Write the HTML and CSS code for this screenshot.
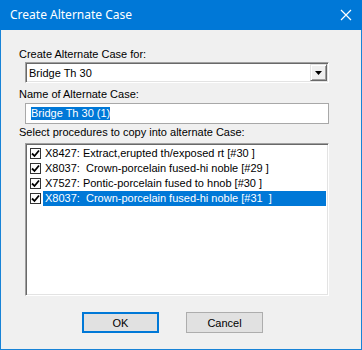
FILE: index.html
```html
<!DOCTYPE html>
<html lang="en">

<head>
    <meta charset="UTF-8">
    <meta name="viewport" content="width=device-width, initial-scale=1.0">
    <link rel="stylesheet" href="styles.css">
    <title>Create Alternate Case</title>
</head>

<body>
    <div class="window">
        <div class="title-bar">
            <span class="title">Create Alternate Case</span>
            <svg class="close" width="12" height="12" viewBox="0 0 12 12">
                <path d="M1 1 L11 11 M11 1 L1 11" stroke="#fff" stroke-width="1.2" fill="none"/>
            </svg>
        </div>

        <div class="content">
            <label class="label label-first">Create Alternate Case for:</label>
            <div class="combo">
                <span class="combo-text">Bridge Th 30</span>
                <span class="combo-button">
                    <svg width="7" height="4" viewBox="0 0 7 4"><path d="M0 0 H7 L3.5 4 Z" fill="#000"/></svg>
                </span>
            </div>

            <label class="label label-name">Name of Alternate Case:</label>
            <div class="textbox"><span class="selected-text">Bridge Th 30 (1)</span></div>

            <label class="label label-list">Select procedures to copy into alternate Case:</label>
            <div class="listbox">
                <div class="row">
                    <span class="check"><svg width="9" height="9" viewBox="0 0 9 9"><path d="M1 4.5 L3.5 7 L8 1.5" stroke="#000" stroke-width="1.8" fill="none"/></svg></span>
                    <span class="row-text">X8427: Extract,erupted th/exposed rt [#30 ]</span>
                </div>
                <div class="row">
                    <span class="check"><svg width="9" height="9" viewBox="0 0 9 9"><path d="M1 4.5 L3.5 7 L8 1.5" stroke="#000" stroke-width="1.8" fill="none"/></svg></span>
                    <span class="row-text">X8037:  Crown-porcelain fused-hi noble [#29 ]</span>
                </div>
                <div class="row">
                    <span class="check"><svg width="9" height="9" viewBox="0 0 9 9"><path d="M1 4.5 L3.5 7 L8 1.5" stroke="#000" stroke-width="1.8" fill="none"/></svg></span>
                    <span class="row-text">X7527: Pontic-porcelain fused to hnob [#30 ]</span>
                </div>
                <div class="row row-selected">
                    <span class="check"><svg width="9" height="9" viewBox="0 0 9 9"><path d="M1 4.5 L3.5 7 L8 1.5" stroke="#000" stroke-width="1.8" fill="none"/></svg></span>
                    <span class="row-text">X8037:  Crown-porcelain fused-hi noble [#31  ]</span>
                </div>
            </div>

            <div class="buttons">
                <button class="btn btn-default">OK</button>
                <button class="btn">Cancel</button>
            </div>
        </div>
    </div>
</body>

</html>
```

FILE: styles.css
```css
* {
    box-sizing: border-box;
    margin: 0;
    padding: 0;
}

body {
    background-color: #f0f0f0;
    font-family: "Liberation Sans", Arial, sans-serif;
    font-size: 11px;
    line-height: 13px;
    color: #000;
}

.window {
    width: 362px;
    height: 350px;
    display: flex;
    flex-direction: column;
    background-color: #f0f0f0;
    border: 1px solid #1883d7;
    border-top: none;
}

.title-bar {
    height: 30px;
    margin: 0 -1px;
    background-color: #0078d7;
    display: flex;
    align-items: center;
    justify-content: space-between;
    padding: 0 10px 0 10px;
}

.title {
    font-family: "Noto Sans", "Open Sans", sans-serif;
    font-size: 12px;
    color: #fff;
    line-height: 16px;
    margin-top: -1px;
}

.close {
    margin-top: -1px;
}

.content {
    display: flex;
    flex-direction: column;
    padding: 0 0 0 18px;
}

.label {
    display: block;
    white-space: nowrap;
}

.label-first {
    margin-top: 18px;
    margin-bottom: 1px;
}

.label-name {
    margin-top: 5px;
    margin-bottom: 2px;
}

.label-list {
    margin-top: 2px;
    margin-bottom: 4px;
}

.combo {
    margin-left: 6px;
    width: 304px;
    height: 21px;
    background-color: #fff;
    border-top: 1px solid #a0a0a0;
    border-left: 1px solid #a0a0a0;
    border-right: 1px solid #fff;
    border-bottom: 1px solid #fff;
    box-shadow: inset 1px 1px 0 #696969, inset -1px -1px 0 #e3e3e3;
    display: flex;
    align-items: center;
    justify-content: space-between;
    padding: 1px 1px 1px 3px;
}

.combo-text {
    padding-top: 1px;
}

.combo-button {
    width: 17px;
    height: 17px;
    background-color: #f0f0f0;
    border-top: 1px solid #e3e3e3;
    border-left: 1px solid #e3e3e3;
    border-right: 1px solid #696969;
    border-bottom: 1px solid #696969;
    box-shadow: inset 1px 1px 0 #fff, inset -1px -1px 0 #a0a0a0;
    display: flex;
    align-items: center;
    justify-content: center;
    padding-top: 1px;
}

.textbox {
    margin-left: 6px;
    width: 304px;
    height: 21px;
    background-color: #fff;
    border: 1px solid #a8a8a8;
    display: flex;
    align-items: center;
    padding-left: 5px;
}

.selected-text {
    background-color: #0078d7;
    color: #fff;
    line-height: 13px;
}

.listbox {
    margin-left: 6px;
    width: 304px;
    height: 153px;
    background-color: #fff;
    border-top: 1px solid #a0a0a0;
    border-left: 1px solid #a0a0a0;
    border-right: 1px solid #fff;
    border-bottom: 1px solid #fff;
    box-shadow: inset 1px 1px 0 #696969, inset -1px -1px 0 #e3e3e3;
    padding: 2px 2px 0 4px;
}

.row {
    display: flex;
    align-items: center;
    height: 15px;
}

.check {
    width: 11px;
    height: 11px;
    border: 1px solid #333;
    background-color: #fff;
    display: flex;
    align-items: center;
    justify-content: center;
    margin-right: 2px;
    flex-shrink: 0;
}

.row-text {
    white-space: pre;
    line-height: 15px;
    padding-left: 2px;
    flex-grow: 1;
}

.row-selected .row-text {
    background-color: #0078d7;
    color: #fff;
}

.buttons {
    display: flex;
    gap: 27px;
    margin-top: 16px;
    margin-left: 63px;
}

.btn {
    width: 77px;
    height: 21px;
    background-color: #e1e1e1;
    border: 1px solid #adadad;
    font-family: "Liberation Sans", Arial, sans-serif;
    font-size: 11px;
    color: #000;
}

.btn-default {
    border: 2px solid #0078d7;
}
```
